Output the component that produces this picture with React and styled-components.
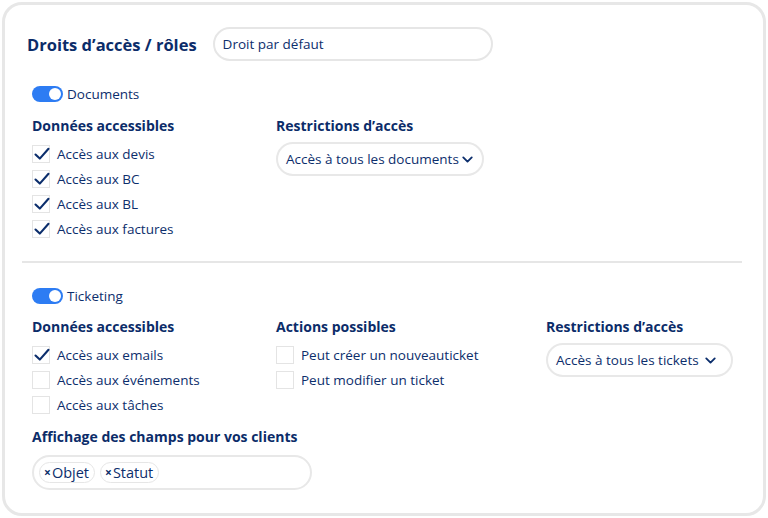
import React from "react";
import styled, { createGlobalStyle } from "styled-components";
import { ChevronDown } from "lucide-react";

const GlobalStyle = createGlobalStyle`
  html, body {
    margin: 0;
    padding: 0;
    background: #ffffff;
  }
  body {
    font-family: "Open Sans", "Noto Sans", sans-serif;
    color: #0c2e6c;
  }
`;

const Card = styled.div`
  box-sizing: border-box;
  width: 764px;
  height: 514px;
  margin: 2px;
  border: 3px solid #e7e7e7;
  border-radius: 20px;
  padding: 0 21px 0 17px;
  background: #fff;
`;

const Header = styled.div`
  display: flex;
  align-items: center;
  gap: 16px;
  padding: 22px 0 0 5px;
`;

const Title = styled.h1`
  margin: 0;
  font-size: 16.5px;
  font-weight: 700;
  color: #0b2c69;
  white-space: nowrap;
`;

const TextInput = styled.div`
  box-sizing: border-box;
  width: 280px;
  height: 34px;
  border: 2px solid #e6e6e6;
  border-radius: 17px;
  display: flex;
  align-items: center;
  padding: 0 8px;
  font-size: 13.5px;
`;

const Section = styled.section`
  padding-left: 10px;
  padding-top: 24px;
`;

const ToggleRow = styled.div`
  display: flex;
  align-items: center;
  gap: 4px;
  font-size: 13.5px;
`;

const Switch = styled.span`
  position: relative;
  width: 31px;
  height: 16px;
  border-radius: 8px;
  background: #2d7cf3;
  &::after {
    content: "";
    position: absolute;
    right: 2px;
    top: 2px;
    width: 12px;
    height: 12px;
    border-radius: 50%;
    background: #fff;
  }
`;

const Columns = styled.div`
  display: grid;
  grid-template-columns: 244px 270px 1fr;
  margin-top: ${(p) => p.$top}px;
`;

const Heading = styled.h2`
  margin: 0 0 10px;
  font-size: 14px;
  font-weight: 700;
  line-height: 18px;
  color: #0b2c69;
`;

const List = styled.div`
  display: flex;
  flex-direction: column;
  gap: 7px;
`;

const CheckRow = styled.label`
  display: flex;
  align-items: center;
  gap: 7px;
  font-size: 13.5px;
  line-height: 18px;
`;

const Box = styled.span`
  position: relative;
  box-sizing: border-box;
  width: 18px;
  height: 18px;
  border: 1px solid #e4e4e4;
  flex-shrink: 0;
  svg {
    position: absolute;
    left: 0px;
    top: -1px;
  }
`;

const Select = styled.div`
  box-sizing: border-box;
  height: 34px;
  width: ${(p) => p.$w}px;
  margin-top: -3px;
  border: 2px solid #e8e8e8;
  border-radius: 17px;
  display: flex;
  align-items: center;
  justify-content: space-between;
  padding: 0 ${(p) => p.$pr}px 0 8px;
  font-size: 13.5px;
  white-space: nowrap;
  svg {
    flex-shrink: 0;
  }
`;

const Divider = styled.hr`
  margin: 23px 0 0;
  border: none;
  border-top: 2px solid #e6e6e6;
`;

const FieldsBlock = styled.div`
  margin-top: 14px;
  h2 {
    margin-bottom: 9px;
  }
`;

const TagInput = styled.div`
  box-sizing: border-box;
  width: 280px;
  height: 35px;
  border: 2px solid #e8e8e8;
  border-radius: 18px;
  display: flex;
  align-items: center;
  gap: 5px;
  padding: 0 5px;
`;

const Tag = styled.span`
  display: inline-flex;
  align-items: center;
  height: 21px;
  box-sizing: border-box;
  padding: 0 5px 0 4px;
  border: 1.5px solid #e6e6e6;
  border-radius: 11px;
  font-size: 14.5px;
  span {
    font-size: 12px;
    font-weight: 700;
    margin-right: 1px;
  }
`;

const Check = ({ checked, children }) => (
  <CheckRow>
    <Box>
      {checked && (
        <svg width="18" height="18" viewBox="0 0 18 18">
          <path
            d="M2.5 9.5 L6.8 13.6 L15.5 3.8"
            fill="none"
            stroke="#0c2e6c"
            strokeWidth="2.1"
            strokeLinecap="round"
            strokeLinejoin="round"
          />
        </svg>
      )}
    </Box>
    {children}
  </CheckRow>
);

export default function App() {
  return (
    <>
      <GlobalStyle />
      <Card>
        <Header>
          <Title>Droits d’accès / rôles</Title>
          <TextInput>Droit par défaut</TextInput>
        </Header>

        <Section>
          <ToggleRow>
            <Switch />
            Documents
          </ToggleRow>
          <Columns $top={14}>
            <div>
              <Heading>Données accessibles</Heading>
              <List>
                <Check checked>Accès aux devis</Check>
                <Check checked>Accès aux BC</Check>
                <Check checked>Accès aux BL</Check>
                <Check checked>Accès aux factures</Check>
              </List>
            </div>
            <div>
              <Heading>Restrictions d’accès</Heading>
              <Select $w={208} $pr={10}>
                Accès à tous les documents
                <ChevronDown size={17} strokeWidth={2.6} />
              </Select>
            </div>
          </Columns>
        </Section>

        <Divider />

        <Section>
          <ToggleRow>
            <Switch />
            Ticketing
          </ToggleRow>
          <Columns $top={13}>
            <div>
              <Heading>Données accessibles</Heading>
              <List>
                <Check checked>Accès aux emails</Check>
                <Check>Accès aux événements</Check>
                <Check>Accès aux tâches</Check>
              </List>
            </div>
            <div>
              <Heading>Actions possibles</Heading>
              <List>
                <Check>Peut créer un nouveauticket</Check>
                <Check>Peut modifier un ticket</Check>
              </List>
            </div>
            <div>
              <Heading>Restrictions d’accès</Heading>
              <Select $w={187} $pr={12}>
                Accès à tous les tickets
                <ChevronDown size={17} strokeWidth={2.6} />
              </Select>
            </div>
          </Columns>
          <FieldsBlock>
            <Heading>Affichage des champs pour vos clients</Heading>
            <TagInput>
              <Tag>
                <span>×</span>Objet
              </Tag>
              <Tag>
                <span>×</span>Statut
              </Tag>
            </TagInput>
          </FieldsBlock>
        </Section>
      </Card>
    </>
  );
}
